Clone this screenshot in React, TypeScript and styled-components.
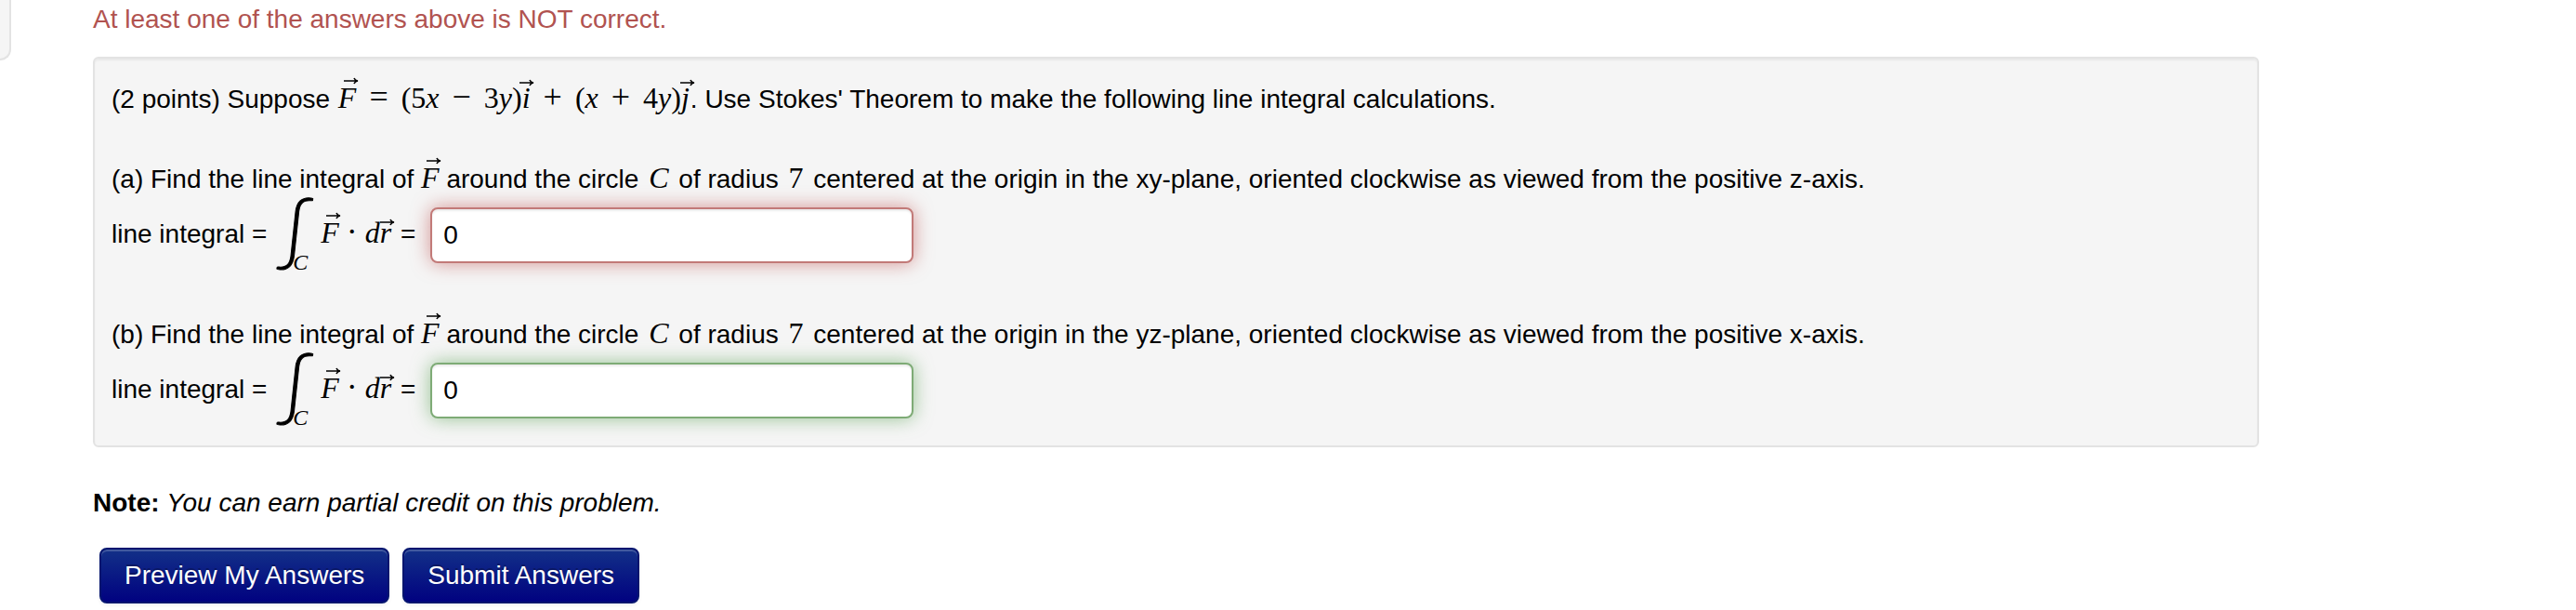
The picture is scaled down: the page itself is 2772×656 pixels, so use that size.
import React from "react";
import styled, { createGlobalStyle } from "styled-components";

const GlobalStyle = createGlobalStyle`
  body {
    margin: 0;
    background: #fff;
    color: #000;
    font: 28px/40px "Helvetica Neue", "Liberation Sans", Arial, sans-serif;
  }
`;

const Page = styled.div`
  display: flex;
  align-items: flex-start;
`;

const SidePanel = styled.aside`
  box-sizing: border-box;
  flex: none;
  width: 12px;
  height: 65px;
  background: #f5f5f5;
  border: solid #e3e3e3;
  border-width: 0 2px 2px 0;
  border-bottom-right-radius: 12px;
`;

const Main = styled.main`
  flex: 1;
  min-width: 0;
  padding: 1px 341px 7px 88px;
`;

const Message = styled.p`
  margin: 0 0 20px;
  color: #b15350;
`;

const Problem = styled.section`
  padding: 24px 18px 19px;
  background: #f5f5f5;
  border: 2px solid #e3e3e3;
  border-radius: 6px;
  box-shadow: inset 0 2px 2px rgba(0, 0, 0, 0.05);
`;

const Text = styled.p`
  margin: 0;
`;

const Question = styled.div`
  margin-top: 46px;

  & + & {
    margin-top: 47px;
  }
`;

const AnswerRow = styled.div`
  display: flex;
  align-items: center;
  height: 80px;
`;

const AnswerLabel = styled.label`
  padding-top: 8px;
  white-space: nowrap;
`;

const AnswerInput = styled.input<{ $correct: boolean }>`
  box-sizing: border-box;
  width: 520px;
  height: 60px;
  margin-left: 16px;
  padding: 0 12px;
  font: inherit;
  color: #000;
  background: #fff;
  border: 2px solid ${(p) => (p.$correct ? "#7eab76" : "#c27a78")};
  border-radius: 8px;
  outline: none;
  box-shadow:
    inset 0 2px 2px rgba(0, 0, 0, 0.075),
    0 0 20px ${(p) => (p.$correct ? "rgba(86, 160, 80, 0.6)" : "rgba(190, 80, 78, 0.6)")};
`;

const MathText = styled.span<{ $pad?: number }>`
  padding: 0 ${(p) => p.$pad ?? 0}px;
  font-family: "Liberation Serif", "Times New Roman", serif;
  font-size: 32px;
  line-height: 0;
  white-space: nowrap;
`;

const Var = styled.i``;

const Op = styled.span<{ $tight?: boolean }>`
  margin: 0 ${(p) => (p.$tight ? 8 : 14)}px;
  font-size: 36px;
`;

const VectorBox = styled.i`
  position: relative;
`;

const Arrow = styled.svg<{ $rise: number; $shift: number }>`
  position: absolute;
  left: ${(p) => p.$shift}px;
  bottom: ${(p) => p.$rise}px;
  width: 16px;
  height: 8px;
`;

const Integral = styled.i`
  margin-left: 12px;
  font-family: Lato, sans-serif;
  font-size: 78px;
  font-weight: 300;
  vertical-align: -15px;
  -webkit-text-stroke: 1px #000;
`;

const Subscript = styled.i`
  margin-left: -18px;
  margin-right: 14px;
  font-size: 24px;
  vertical-align: -29px;
`;

const Note = styled.p`
  margin: 40px 0 28px;
`;

const Buttons = styled.div`
  display: flex;
  gap: 14px;
  padding-left: 7px;
`;

const Button = styled.button`
  height: 60px;
  padding: 0 25px;
  font: inherit;
  color: #fff;
  text-shadow: 0 -2px 0 rgba(0, 0, 0, 0.25);
  background: linear-gradient(#133288, #000080) border-box;
  border: 2px solid #04156f;
  border-radius: 8px;
  box-shadow:
    inset 0 2px 0 rgba(255, 255, 255, 0.2),
    0 2px 4px rgba(0, 0, 0, 0.05);
`;

function Vector({ name, rise, shift }: { name: string; rise: number; shift: number }) {
  return (
    <VectorBox>
      {name}
      <Arrow $rise={rise} $shift={shift} viewBox="0 0 16 8" aria-hidden="true">
        <path d="M0 4H14M11 1Q12 3.5 15 4Q12 4.5 11 7" fill="none" stroke="#000" strokeWidth="1.6" />
      </Arrow>
    </VectorBox>
  );
}

const VectorF = () => <Vector name="F" rise={32} shift={6} />;

function LineIntegral({ id, part, plane, axis, correct }: {
  id: string;
  part: string;
  plane: string;
  axis: string;
  correct: boolean;
}) {
  return (
    <Question>
      <Text>
        ({part}) Find the line integral of <MathText><VectorF /></MathText> around the circle{" "}
        <MathText $pad={3}><Var>C</Var></MathText> of radius <MathText $pad={3}>7</MathText> centered at the
        origin in the {plane}-plane, oriented clockwise as viewed from the positive {axis}-axis.
      </Text>
      <AnswerRow>
        <AnswerLabel htmlFor={id}>
          line integral =
          <MathText $pad={2}>
            <Integral>∫</Integral>
            <Subscript>C</Subscript>
            <VectorF />
            <Op $tight>·</Op>
            <Var>d</Var>
            <Vector name="r" rise={25} shift={0} />
          </MathText>{" "}
          =
        </AnswerLabel>
        <AnswerInput id={id} type="text" defaultValue="0" $correct={correct} />
      </AnswerRow>
    </Question>
  );
}

export default function App() {
  return (
    <>
      <GlobalStyle />
      <Page>
        <SidePanel />
        <Main>
          <Message>At least one of the answers above is NOT correct.</Message>
          <Problem>
            <Text>
              (2 points) Suppose{" "}
              <MathText $pad={1}>
                <VectorF />
                <Op>=</Op>(5<Var>x</Var>
                <Op>−</Op>3<Var>y</Var>)<Vector name="i" rise={30} shift={-3} />
                <Op>+</Op>(<Var>x</Var>
                <Op>+</Op>4<Var>y</Var>)<Vector name="j" rise={30} shift={-1} />
              </MathText>
              . Use Stokes' Theorem to make the following line integral calculations.
            </Text>
            <LineIntegral id="answer-a" part="a" plane="xy" axis="z" correct={false} />
            <LineIntegral id="answer-b" part="b" plane="yz" axis="x" correct />
          </Problem>
          <Note>
            <b>Note:</b> <i>You can earn partial credit on this problem.</i>
          </Note>
          <Buttons>
            <Button type="button">Preview My Answers</Button>
            <Button type="submit">Submit Answers</Button>
          </Buttons>
        </Main>
      </Page>
    </>
  );
}
